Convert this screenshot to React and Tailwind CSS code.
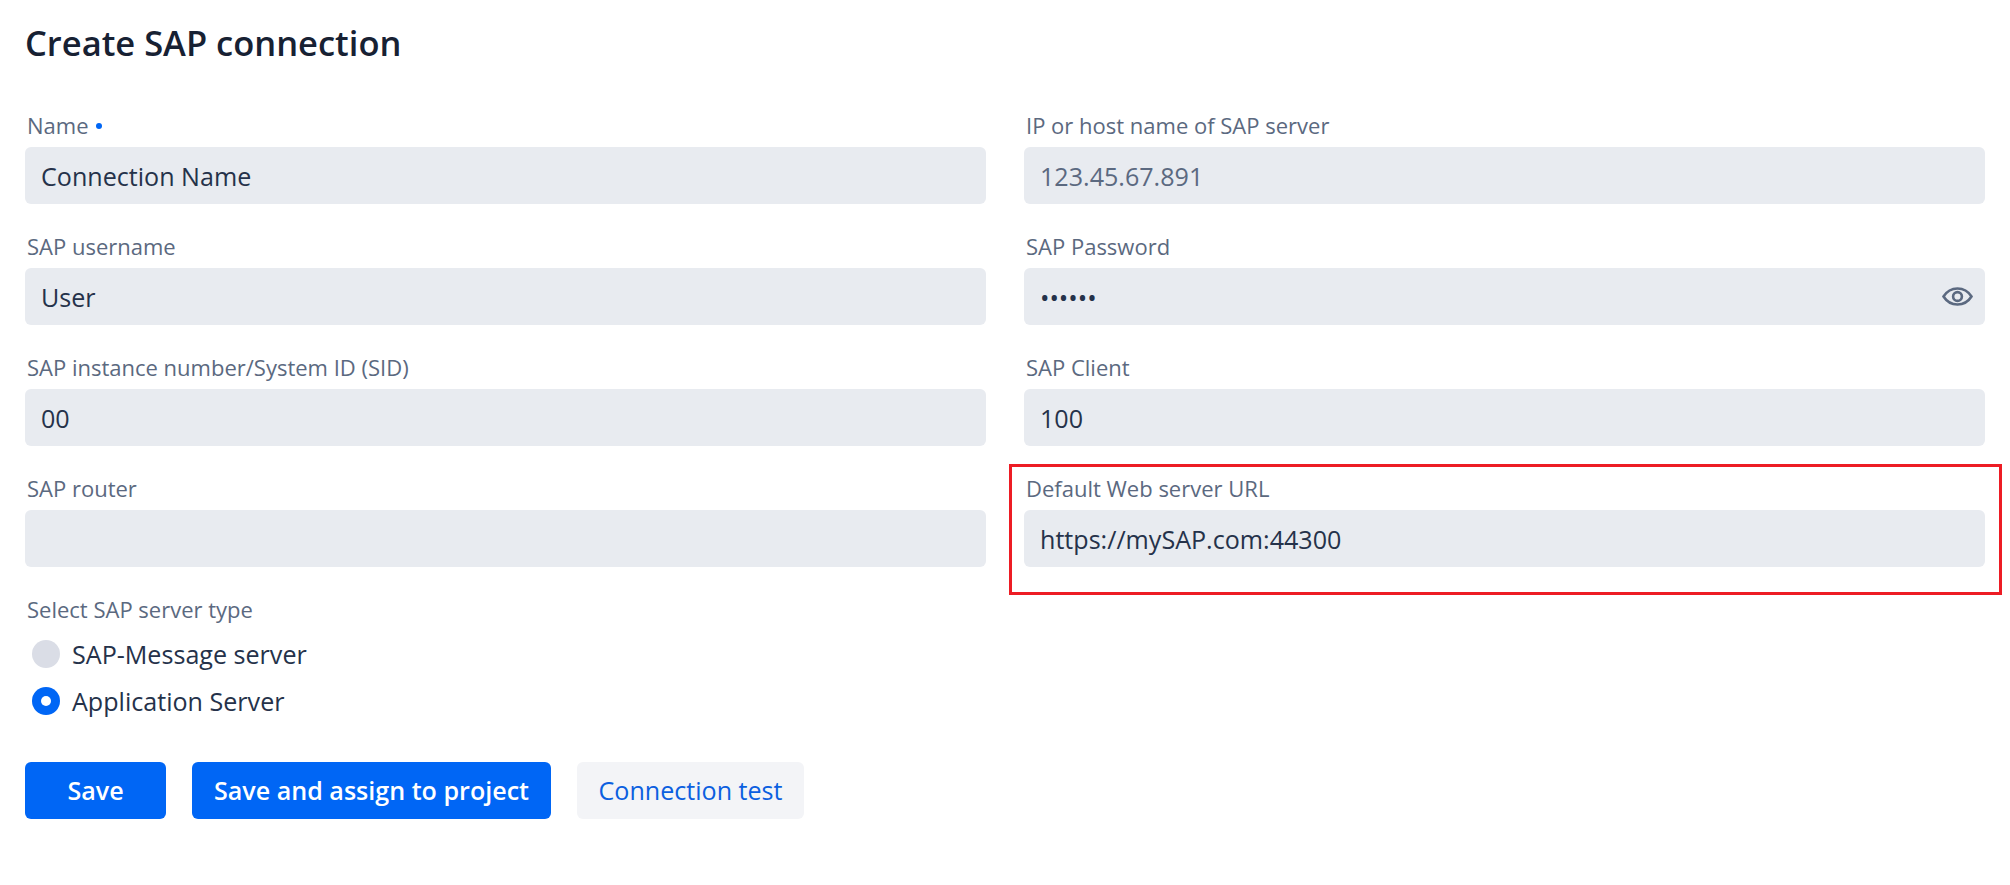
const font = { fontFamily: '"Open Sans", sans-serif' };

function Field({ label, required, value, muted, children }) {
  return (
    <div className="flex flex-col">
      <div className="h-[33px] mb-[5px] pl-[2px] text-[22px] leading-[33px] text-[#5b6980] flex items-center">
        {label}
        {required && <span className="ml-[7px] w-[6px] h-[6px] rounded-full bg-[#0066f5]" />}
      </div>
      <div className={`h-[57px] rounded-[6px] bg-[#e8ebf0] pl-[16px] pr-[12px] pt-[2px] flex items-center justify-between text-[25.1px] ${muted ? 'text-[#5b6980]' : 'text-[#25324a]'}`}>
        <span>{value}</span>
        {children}
      </div>
    </div>
  );
}

function Eye() {
  return (
    <svg className="-mt-[2px]" width="31" height="19" viewBox="0 0 31 19" fill="none" stroke="#5b6980" strokeWidth="2.6">
      <path d="M1.5 9.5C5 4 10 1.5 15.5 1.5S26 4 29.5 9.5C26 15 21 17.5 15.5 17.5S5 15 1.5 9.5Z" />
      <circle cx="15.5" cy="9.5" r="4.4" />
    </svg>
  );
}

export default function App() {
  return (
    <div className="relative w-[2010px] h-[885px] bg-white px-[25px] pt-[21px] overflow-hidden" style={font}>
      <h1 className="text-[34.5px] leading-[44px] font-semibold text-[#172133]">Create SAP connection</h1>

      <div className="grid grid-cols-2 gap-x-[38px] gap-y-[26px] mt-[44px]">
        <Field label="Name" required value="Connection Name" />
        <Field label="IP or host name of SAP server" value="123.45.67.891" muted />
        <Field label="SAP username" value="User" />
        <Field label="SAP Password" value="••••••">
          <Eye />
        </Field>
        <Field label="SAP instance number/System ID (SID)" value="00" />
        <Field label="SAP Client" value="100" />
        <Field label="SAP router" value="" />
        <Field label="Default Web server URL" value="https://mySAP.com:44300" />
      </div>

      <div className="mt-[26px] h-[33px] pl-[2px] text-[22px] leading-[33px] text-[#5b6980]">Select SAP server type</div>

      <div className="mt-[14px] flex flex-col gap-[19px] pl-[7px]">
        <div className="flex items-center gap-[12px] h-[28px] text-[25.1px] text-[#25324a]">
          <span className="w-[28px] h-[28px] rounded-full bg-[#dadde6]" />
          <span className="pt-[2px]">SAP-Message server</span>
        </div>
        <div className="flex items-center gap-[12px] h-[28px] text-[25.1px] text-[#25324a]">
          <span className="w-[28px] h-[28px] rounded-full bg-[#0066f5] flex items-center justify-center">
            <span className="w-[10px] h-[10px] rounded-full bg-white" />
          </span>
          <span className="pt-[2px]">Application Server</span>
        </div>
      </div>

      <div className="mt-[47px] flex gap-[26px]">
        <button className="w-[141px] h-[57px] rounded-[6px] pt-[1px] bg-[#0066f5] text-white text-[25.1px] font-semibold">Save</button>
        <button className="w-[359px] h-[57px] rounded-[6px] pt-[1px] bg-[#0066f5] text-white text-[25.1px] font-semibold">Save and assign to project</button>
        <button className="w-[227px] h-[57px] rounded-[6px] pt-[1px] bg-[#f3f4f7] text-[#0b5fe0] text-[25.1px]">Connection test</button>
      </div>

      <div className="absolute left-[1009px] top-[464px] w-[993px] h-[131px] border-[3px] border-[#ed1c24]" />
    </div>
  );
}
